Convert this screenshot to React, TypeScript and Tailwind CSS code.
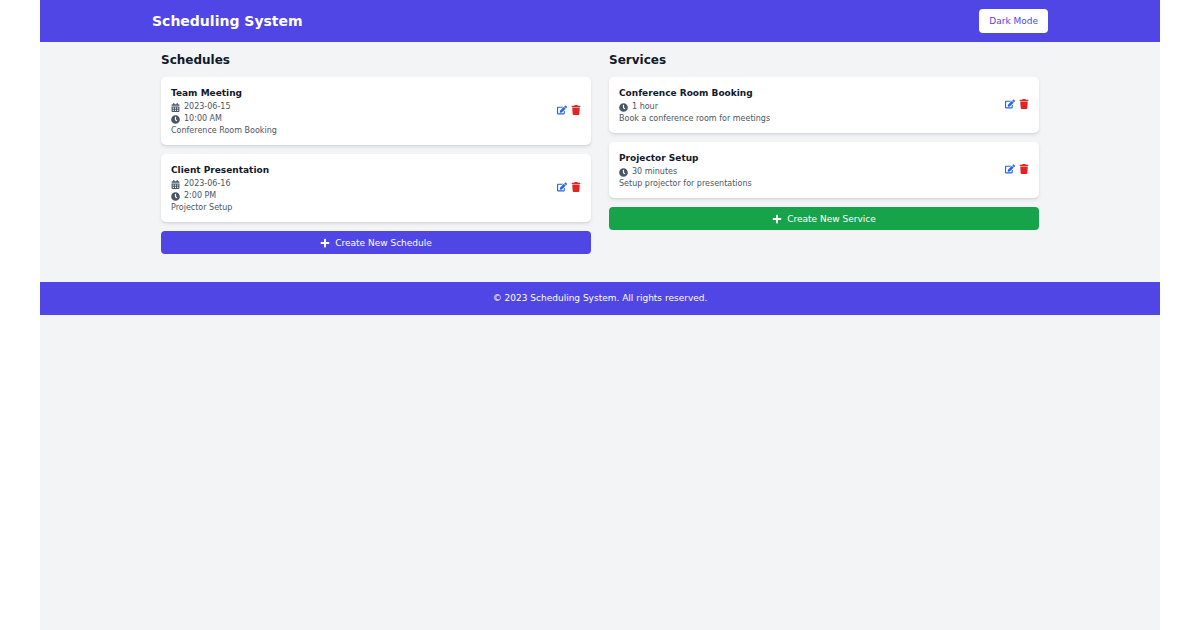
import { useState, type ReactNode } from "react";
import { FaCalendarAlt, FaClock, FaEdit, FaPlus, FaTrash } from "react-icons/fa";

type Schedule = {
  id: number;
  title: string;
  date: string;
  time: string;
  service: string;
};

type Service = {
  id: number;
  name: string;
  duration: string;
  description: string;
};

const initialSchedules: Schedule[] = [
  {
    id: 1,
    title: "Team Meeting",
    date: "2023-06-15",
    time: "10:00 AM",
    service: "Conference Room Booking",
  },
  {
    id: 2,
    title: "Client Presentation",
    date: "2023-06-16",
    time: "2:00 PM",
    service: "Projector Setup",
  },
];

const initialServices: Service[] = [
  {
    id: 1,
    name: "Conference Room Booking",
    duration: "1 hour",
    description: "Book a conference room for meetings",
  },
  {
    id: 2,
    name: "Projector Setup",
    duration: "30 minutes",
    description: "Setup projector for presentations",
  },
];

function Card({
  title,
  onDelete,
  children,
}: {
  title: string;
  onDelete: () => void;
  children: ReactNode;
}) {
  return (
    <li className="flex items-center justify-between rounded-[5px] bg-white px-[10px] pt-[9px] pb-[8px] shadow-[0_2px_4px_-1px_rgba(0,0,0,0.14),0_1px_2px_-1px_rgba(0,0,0,0.1)]">
      <div>
        <h3 className="mb-px text-[9px] leading-[14px] font-bold">{title}</h3>
        <div className="text-[8px] leading-[12px] text-[#4b5563]">{children}</div>
      </div>
      <div className="flex gap-1 pb-1 text-[10px]">
        <button type="button" aria-label={`Edit ${title}`} className="text-[#2563eb]">
          <FaEdit />
        </button>
        <button
          type="button"
          aria-label={`Delete ${title}`}
          onClick={onDelete}
          className="text-[#dc2626]"
        >
          <FaTrash />
        </button>
      </div>
    </li>
  );
}

// Icon + value line inside a card
function Detail({ icon, children }: { icon: ReactNode; children: ReactNode }) {
  return (
    <p className="flex items-center gap-1">
      <span className="pt-px text-[9px]">{icon}</span>
      {children}
    </p>
  );
}

export default function App() {
  const [dark, setDark] = useState(false);
  const [schedules, setSchedules] = useState(initialSchedules);
  const [services, setServices] = useState(initialServices);

  return (
    <div className="min-h-screen bg-white px-10 font-['DejaVu_Sans',sans-serif]">
      <div
        className={`min-h-screen ${dark ? "bg-[#111827]" : "bg-[#f3f4f6]"} text-[9px] leading-[14px] text-[#111827]`}
      >
        <header className="bg-[#4f46e5] py-[9px] text-white">
          <div className="mx-auto flex max-w-4xl items-center justify-between">
            <h1 className="text-[14px] leading-[19px] font-bold">Scheduling System</h1>
            <button
              type="button"
              onClick={() => setDark(!dark)}
              className="rounded-[4px] bg-white px-2.5 py-[5px] text-[#4f46e5]"
            >
              {dark ? "Light Mode" : "Dark Mode"}
            </button>
          </div>
        </header>

        <main className="mx-auto grid max-w-4xl grid-cols-2 pb-[19px]">
          {/* Schedules */}
          <section className="p-[9px]">
            <h2
              className={`mb-[7px] text-[12px] leading-[19px] font-bold ${dark ? "text-white" : ""}`}
            >
              Schedules
            </h2>
            <ul className="mb-[9px] flex flex-col gap-[9px]">
              {schedules.map((s) => (
                <Card
                  key={s.id}
                  title={s.title}
                  onDelete={() => setSchedules(schedules.filter((x) => x.id !== s.id))}
                >
                  <Detail icon={<FaCalendarAlt />}>{s.date}</Detail>
                  <Detail icon={<FaClock />}>{s.time}</Detail>
                  <p>{s.service}</p>
                </Card>
              ))}
            </ul>
            <button
              type="button"
              className="flex h-[23px] w-full items-center justify-center gap-[5px] rounded-[4px] bg-[#4f46e5] text-white"
            >
              <FaPlus className="text-[10px]" />
              Create New Schedule
            </button>
          </section>

          {/* Services */}
          <section className="p-[9px]">
            <h2
              className={`mb-[7px] text-[12px] leading-[19px] font-bold ${dark ? "text-white" : ""}`}
            >
              Services
            </h2>
            <ul className="mb-[9px] flex flex-col gap-[9px]">
              {services.map((s) => (
                <Card
                  key={s.id}
                  title={s.name}
                  onDelete={() => setServices(services.filter((x) => x.id !== s.id))}
                >
                  <Detail icon={<FaClock />}>{s.duration}</Detail>
                  <p>{s.description}</p>
                </Card>
              ))}
            </ul>
            <button
              type="button"
              className="flex h-[23px] w-full items-center justify-center gap-[5px] rounded-[4px] bg-[#16a34a] text-white"
            >
              <FaPlus className="text-[10px]" />
              Create New Service
            </button>
          </section>
        </main>

        <footer className="bg-[#4f46e5] pt-[9px] pb-[10px] text-center text-white">
          <p>© 2023 Scheduling System. All rights reserved.</p>
        </footer>
      </div>
    </div>
  );
}
